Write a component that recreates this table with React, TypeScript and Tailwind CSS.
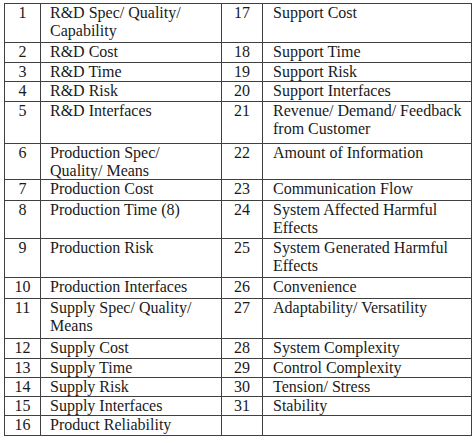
import React from 'react'

type Row = {
	h: number
	a: string
	aText: string
	b: string
	bText: string
}

const rows: Row[] = [
	{ h: 39, a: '1', aText: 'R&D Spec/ Quality/ Capability', b: '17', bText: 'Support Cost' },
	{ h: 20, a: '2', aText: 'R&D Cost', b: '18', bText: 'Support Time' },
	{ h: 19, a: '3', aText: 'R&D Time', b: '19', bText: 'Support Risk' },
	{ h: 20, a: '4', aText: 'R&D Risk', b: '20', bText: 'Support Interfaces' },
	{ h: 42, a: '5', aText: 'R&D Interfaces', b: '21', bText: 'Revenue/ Demand/ Feedback from Customer' },
	{ h: 35, a: '6', aText: 'Production Spec/ Quality/ Means', b: '22', bText: 'Amount of Information' },
	{ h: 21, a: '7', aText: 'Production Cost', b: '23', bText: 'Communication Flow' },
	{ h: 38, a: '8', aText: 'Production Time (8)', b: '24', bText: 'System Affected Harmful Effects' },
	{ h: 39, a: '9', aText: 'Production Risk', b: '25', bText: 'System Generated Harmful Effects' },
	{ h: 21, a: '10', aText: 'Production Interfaces', b: '26', bText: 'Convenience' },
	{ h: 40, a: '11', aText: 'Supply Spec/ Quality/ Means', b: '27', bText: 'Adaptability/ Versatility' },
	{ h: 20, a: '12', aText: 'Supply Cost', b: '28', bText: 'System Complexity' },
	{ h: 19, a: '13', aText: 'Supply Time', b: '29', bText: 'Control Complexity' },
	{ h: 19, a: '14', aText: 'Supply Risk', b: '30', bText: 'Tension/ Stress' },
	{ h: 19, a: '15', aText: 'Supply Interfaces', b: '31', bText: 'Stability' },
	{ h: 20, a: '16', aText: 'Product Reliability', b: '', bText: '' },
]

const cell = 'border-[1.5px] border-[#404040] p-0 align-top'

export default function App() {
	return (
		<div className="min-h-[443px] w-[474px] bg-white pl-[4px] pt-[3px]">
			<table
				className="table-fixed border-collapse text-[16px] leading-[17.5px] text-[#1a1a1a]"
				style={{ fontFamily: '"Liberation Serif", "Times New Roman", serif', width: 467 }}
			>
				<colgroup>
					<col className="w-[36px]" />
					<col className="w-[181px]" />
					<col className="w-[41px]" />
					<col className="w-[209px]" />
				</colgroup>
				<tbody>
					{rows.map((r) => (
						<tr key={r.a} style={{ height: r.h }}>
							<td className={`${cell} text-center`}>{r.a}</td>
							<td className={`${cell} pl-[9px] pr-[20px]`}>{r.aText}</td>
							<td className={`${cell} text-center`}>{r.b}</td>
							<td className={`${cell} pl-[10px] pr-[4px]`}>{r.bText}</td>
						</tr>
					))}
				</tbody>
			</table>
		</div>
	)
}
